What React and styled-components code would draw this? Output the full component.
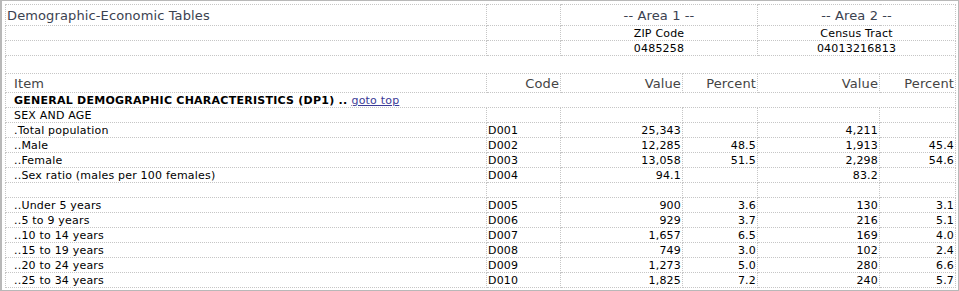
import React from 'react';
import styled, { createGlobalStyle } from 'styled-components';

const GlobalStyle = createGlobalStyle`
  html, body {
    margin: 0;
    padding: 0;
    background: #fff;
  }
`;

const Frame = styled.div`
  height: 291px;
  box-sizing: border-box;
  border: 1px solid #b8b8b8;
  border-left-width: 2px;
  padding: 3px 3px 0 3px;
  overflow: hidden;
  background: #fff;
`;

const Table = styled.table`
  width: 100%;
  border-collapse: collapse;
  table-layout: fixed;
  font-family: "DejaVu Sans", Verdana, sans-serif;
  font-size: 11px;
  letter-spacing: 0.2px;
  color: #000;
`;

const Cell = styled.td`
  border: 1px dotted #c6c6c6;
  padding: 0 1px 0 ${(p) => (p.$indent ? '8px' : '1px')};
  height: 14px;
  line-height: 13px;
  white-space: nowrap;
  overflow: hidden;
  text-align: ${(p) => p.$align || 'left'};
  font-weight: ${(p) => (p.$bold ? 'bold' : 'normal')};
  letter-spacing: ${(p) => (p.$bold ? '0.25px' : '0.2px')};
  vertical-align: middle;
`;

const TitleCell = styled(Cell)`
  height: 20px;
  font-size: 13px;
  letter-spacing: 0.12px;
  color: #3b4250;
`;

const HeadCell = styled(Cell)`
  height: 18px;
  font-size: 13px;
  letter-spacing: 0.12px;
  color: #444;
`;

const SpacerCell = styled(Cell)`
  height: 17px;
`;

const TopLink = styled.a`
  color: #3a3a96;
  text-decoration: underline;
  font-weight: normal;
  letter-spacing: 0.2px;
  cursor: pointer;
`;

const widths = [481, 74, 122, 75, 122, 76];

const rows = [
  { item: 'SEX AND AGE' },
  { item: '.Total population', code: 'D001', v1: '25,343', v2: '4,211' },
  { item: '..Male', code: 'D002', v1: '12,285', p1: '48.5', v2: '1,913', p2: '45.4' },
  { item: '..Female', code: 'D003', v1: '13,058', p1: '51.5', v2: '2,298', p2: '54.6' },
  { item: '..Sex ratio (males per 100 females)', code: 'D004', v1: '94.1', v2: '83.2' },
  { item: '' },
  { item: '..Under 5 years', code: 'D005', v1: '900', p1: '3.6', v2: '130', p2: '3.1' },
  { item: '..5 to 9 years', code: 'D006', v1: '929', p1: '3.7', v2: '216', p2: '5.1' },
  { item: '..10 to 14 years', code: 'D007', v1: '1,657', p1: '6.5', v2: '169', p2: '4.0' },
  { item: '..15 to 19 years', code: 'D008', v1: '749', p1: '3.0', v2: '102', p2: '2.4' },
  { item: '..20 to 24 years', code: 'D009', v1: '1,273', p1: '5.0', v2: '280', p2: '6.6' },
  { item: '..25 to 34 years', code: 'D010', v1: '1,825', p1: '7.2', v2: '240', p2: '5.7' },
];

export default function App() {
  return (
    <Frame>
      <GlobalStyle />
      <Table>
        <colgroup>
          {widths.map((w, i) => (
            <col key={i} style={{ width: w }} />
          ))}
        </colgroup>
        <tbody>
          <tr>
            <TitleCell>Demographic-Economic Tables</TitleCell>
            <TitleCell />
            <TitleCell colSpan={2} $align="center">-- Area 1 --</TitleCell>
            <TitleCell colSpan={2} $align="center">-- Area 2 --</TitleCell>
          </tr>
          <tr>
            <Cell />
            <Cell />
            <Cell colSpan={2} $align="center">ZIP Code</Cell>
            <Cell colSpan={2} $align="center">Census Tract</Cell>
          </tr>
          <tr>
            <Cell />
            <Cell />
            <Cell colSpan={2} $align="center">0485258</Cell>
            <Cell colSpan={2} $align="center">04013216813</Cell>
          </tr>
          <tr>
            <SpacerCell colSpan={6} />
          </tr>
          <tr>
            <HeadCell $indent>Item</HeadCell>
            <HeadCell $align="right">Code</HeadCell>
            <HeadCell $align="right">Value</HeadCell>
            <HeadCell $align="right">Percent</HeadCell>
            <HeadCell $align="right">Value</HeadCell>
            <HeadCell $align="right">Percent</HeadCell>
          </tr>
          <tr>
            <Cell colSpan={6} $indent $bold>
              GENERAL DEMOGRAPHIC CHARACTERISTICS (DP1) .. <TopLink href="#top">goto top</TopLink>
            </Cell>
          </tr>
          {rows.map((r, i) => (
            <tr key={i}>
              <Cell $indent>{r.item}</Cell>
              <Cell>{r.code}</Cell>
              <Cell $align="right">{r.v1}</Cell>
              <Cell $align="right">{r.p1}</Cell>
              <Cell $align="right">{r.v2}</Cell>
              <Cell $align="right">{r.p2}</Cell>
            </tr>
          ))}
        </tbody>
      </Table>
    </Frame>
  );
}
